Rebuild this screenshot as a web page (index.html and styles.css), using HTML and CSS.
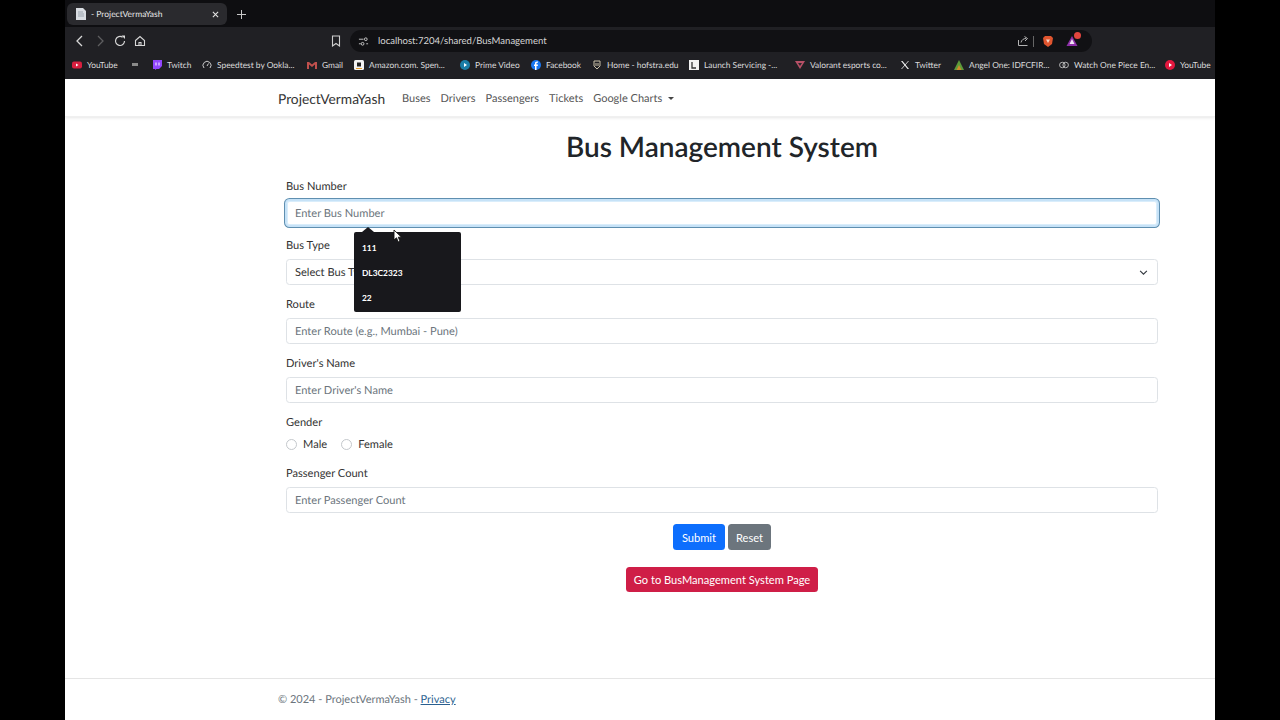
FILE: index.html
```html
<!DOCTYPE html>
<html lang="en">
<head>
<meta charset="utf-8">
<title>ProjectVermaYash</title>
<link rel="stylesheet" href="styles.css">
</head>
<body>
<div class="window">
  <div class="tabstrip">
    <div class="tab">
      <svg class="tab-ico" viewBox="0 0 12 12"><path d="M1 0h7l3 3v9H1z" fill="#d9dde2"/><path d="M3 4h5M3 6h6M3 8h6" stroke="#9aa3ad" stroke-width="1"/></svg>
      <span class="tab-title">- ProjectVermaYash</span>
      <svg class="tab-x" viewBox="0 0 8 8"><path d="M1 1l6 6M7 1l-6 6" stroke="#e4e4e4" stroke-width="1.2"/></svg>
    </div>
    <svg class="tab-new" viewBox="0 0 9 9"><path d="M4.500 0v9M0 4.500h9" stroke="#c8c8c8" stroke-width="1"/></svg>
  </div>
  <div class="toolbar">
    <svg class="tool back" viewBox="0 0 12 12"><path d="M8 1L3 6l5 5" fill="none" stroke="#d8d8d8" stroke-width="1.3"/></svg>
    <svg class="tool fwd" viewBox="0 0 12 12"><path d="M4 1l5 5-5 5" fill="none" stroke="#5e5e60" stroke-width="1.3"/></svg>
    <svg class="tool reload" viewBox="0 0 12 12"><path d="M10.500 6A4.500 4.500 0 1 1 8.600 2.300" fill="none" stroke="#d8d8d8" stroke-width="1.2"/><path d="M7.500 0.500h3.500v3.500z" fill="#d8d8d8"/></svg>
    <svg class="tool home" viewBox="0 0 12 12"><path d="M1.500 5.500L6 1.500l4.500 4v5h-9zM5 10.500V7.500h2v3" fill="none" stroke="#d8d8d8" stroke-width="1.100"/></svg>
    <svg class="tool mark" viewBox="0 0 12 12"><path d="M2.500 1h7v10L6 8.500 2.500 11z" fill="none" stroke="#cfcfcf" stroke-width="1.100"/></svg>
    <div class="omnibox">
      <svg class="site" viewBox="0 0 12 12"><path d="M1 3.500h5M9 8.500h2M1 8.500h2" stroke="#cfcfcf"/><circle cx="8.500" cy="3.500" r="1.500" fill="none" stroke="#cfcfcf"/><circle cx="5" cy="8.500" r="1.500" fill="none" stroke="#cfcfcf"/></svg>
      <span class="url">localhost:7204/shared/BusManagement</span>
      <svg class="share" viewBox="0 0 12 12"><path d="M1.500 5v5.500h9M4 7.500C4.500 5 6.500 3.500 9 3.500M7.500 1.500l3 2-2.500 2.500" fill="none" stroke="#b5b5b5"/></svg>
      <span class="omni-sep"></span>
      <svg class="brave" viewBox="0 0 12 12"><path d="M3 1h6l2 2-1 6-4 3-4-3-1-6z" fill="#e0552f"/><path d="M4 4.500h4L6 8z" fill="#f4d6c8"/></svg>
      <span class="rewards">
        <svg class="rewards-ico" viewBox="0 0 12 12"><path d="M6 1l5.500 10H.5z" fill="#8d2fa8"/><path d="M6 4l2.500 5h-5z" fill="#f2e6f5"/></svg>
        <span class="badge"></span>
      </span>
    </div>
  </div>
  <div class="bookmarks">
    <span class="bm w-yt"><svg viewBox="0 0 10 10"><rect y="1.500" width="10" height="7" rx="2" fill="#d81f3f"/><path d="M4 3.500l2.500 1.500L4 6.500z" fill="#fff"/></svg>YouTube</span>
    <span class="bm w-dot"><svg viewBox="0 0 10 10"><rect x="2" y="3" width="6" height="3" fill="#8a8a8a"/></svg></span>
    <span class="bm w-tw"><svg viewBox="0 0 10 10"><path d="M1 0h9v6L7 9H4.500L3 10V9H1z" fill="#9146ff"/><path d="M4 2.500v3M7 2.500v3" stroke="#fff"/></svg>Twitch</span>
    <span class="bm w-sp"><svg viewBox="0 0 10 10"><path d="M2 8a4 4 0 1 1 6 0M5 6l1.500-2.500" fill="none" stroke="#ccc"/></svg>Speedtest by Ookla...</span>
    <span class="bm w-gm"><svg viewBox="0 0 10 10"><path d="M0 2h2l3 2.500L8 2h2v7H8V4.500L5 7 2 4.500V9H0z" fill="#c0504d"/></svg>Gmail</span>
    <span class="bm w-am"><svg viewBox="0 0 10 10"><rect width="10" height="10" rx="1.500" fill="#f2f2f2"/><path d="M3 2.500h4v4H3z" fill="#222"/><path d="M2 8.500h6" stroke="#e29a28"/></svg>Amazon.com. Spen...</span>
    <span class="bm w-pr"><svg viewBox="0 0 10 10"><circle cx="5" cy="5" r="5" fill="#1b7da6"/><path d="M4 3l3 2-3 2z" fill="#fff"/></svg>Prime Video</span>
    <span class="bm w-fb"><svg viewBox="0 0 10 10"><circle cx="5" cy="5" r="5" fill="#1877f2"/><path d="M5.500 10V6h1.300l.2-1.500H5.500V3.500c0-.5.2-.7.7-.7H7V1.500H6C4.700 1.500 4 2.200 4 3.400V4.500H3V6h1v4z" fill="#fff"/></svg>Facebook</span>
    <span class="bm w-ho"><svg viewBox="0 0 10 10"><path d="M2 1h6v5L5 9 2 6z" fill="none" stroke="#c9c0a8"/><path d="M4 3v3M6 3v3" stroke="#c9c0a8"/></svg>Home - hofstra.edu</span>
    <span class="bm w-la"><svg viewBox="0 0 10 10"><rect width="10" height="10" fill="#f2f2f2"/><path d="M3 2v6h4" fill="none" stroke="#333" stroke-width="1.300"/></svg>Launch Servicing -...</span>
    <span class="bm w-va"><svg viewBox="0 0 10 10"><path d="M0 1h10L5 9z" fill="#b85067"/><path d="M3 3h4L5 6z" fill="#2a2a2d"/></svg>Valorant esports co...</span>
    <span class="bm w-xx"><svg viewBox="0 0 10 10"><path d="M1 1l6.500 8H9L2.500 1z" fill="#eee"/><path d="M8.500 1L1.500 9" stroke="#eee" stroke-width=".8"/></svg>Twitter</span>
    <span class="bm w-an"><svg viewBox="0 0 10 10"><path d="M5 0l5 10H0z" fill="#5d9a3a"/><path d="M5 5l2.500 5h-5z" fill="#d08a2c"/></svg>Angel One: IDFCFIR...</span>
    <span class="bm w-op"><svg viewBox="0 0 12 10"><circle cx="4" cy="5" r="3.300" fill="none" stroke="#ccc"/><circle cx="8" cy="5" r="3.300" fill="none" stroke="#ccc"/></svg>Watch One Piece En...</span>
    <span class="bm w-y2"><svg viewBox="0 0 10 10"><circle cx="5" cy="5" r="5" fill="#e3173e"/><path d="M4 3l3 2-3 2z" fill="#fff"/></svg>YouTube</span>
  </div>

  <div class="page">
    <nav class="navbar">
      <a class="brand">ProjectVermaYash</a>
      <a class="nav-link">Buses</a>
      <a class="nav-link">Drivers</a>
      <a class="nav-link">Passengers</a>
      <a class="nav-link">Tickets</a>
      <a class="nav-link">Google Charts<span class="caret"></span></a>
    </nav>
    <main class="content">
      <h1 class="title">Bus Management System</h1>
      <form class="form">
        <div class="group autocomplete">
          <label class="label">Bus Number</label>
          <div class="control focus">Enter Bus Number</div>
          <div class="popup">
            <span class="popup-arrow"></span>
            <div class="popup-item">111</div>
            <div class="popup-item">DL3C2323</div>
            <div class="popup-item">22</div>
          </div>
          <svg class="cursor" viewBox="0 0 10 14"><path d="M1 1v10l2.500-2.200L5.200 13l1.800-.8-1.700-4H8.500z" fill="#fff" stroke="#111" stroke-width=".9"/></svg>
        </div>
        <div class="group">
          <label class="label">Bus Type</label>
          <div class="control select"><span class="select-text">Select Bus Type</span>
            <svg class="chev" viewBox="0 0 16 16"><path d="M2 5l6 6 6-6" fill="none" stroke="#343a40" stroke-width="2"/></svg>
          </div>
        </div>
        <div class="group">
          <label class="label">Route</label>
          <div class="control">Enter Route (e.g., Mumbai - Pune)</div>
        </div>
        <div class="group">
          <label class="label">Driver's Name</label>
          <div class="control">Enter Driver's Name</div>
        </div>
        <div class="group">
          <label class="label">Gender</label>
          <div class="radios">
            <span class="radio"></span><span class="radio-text">Male</span>
            <span class="radio"></span><span class="radio-text">Female</span>
          </div>
        </div>
        <div class="group">
          <label class="label">Passenger Count</label>
          <div class="control">Enter Passenger Count</div>
        </div>
        <div class="buttons">
          <button type="button" class="btn blue">Submit</button>
          <button type="button" class="btn gray">Reset</button>
        </div>
        <div class="buttons second">
          <button type="button" class="btn red">Go to BusManagement System Page</button>
        </div>
      </form>
    </main>
    <footer class="footer">© 2024 - ProjectVermaYash - <a class="privacy">Privacy</a></footer>
  </div>
</div>
</body>
</html>
```
FILE: styles.css
```css
* { box-sizing: border-box; }
html, body { margin: 0; height: 100%; background: #000; overflow: hidden; }
body { font-family: Lato, "Open Sans", sans-serif; color: #212529; text-rendering: geometricPrecision; }
.window { width: 1150px; height: 720px; margin-left: 65px; display: flex; flex-direction: column; }

.tabstrip { height: 27px; background: #0e0e11; display: flex; align-items: flex-start; padding: 3px 0 0 2px; }
.tab { width: 160px; height: 22px; background: #2a2a2e; border-radius: 6px; display: flex; align-items: center; padding: 0 8px; color: #e6e6e6; font-size: 8.500px; }
.tab-ico { width: 12px; height: 12px; margin-right: 4px; }
.tab-title { flex: 1; white-space: nowrap; }
.tab-x { width: 7px; height: 7px; }
.tab-new { width: 9px; height: 9px; margin: 7px 0 0 10px; }

.toolbar { height: 26px; background: #202024; display: flex; align-items: center; padding: 2px 0 0 9px; }
.tool { width: 12px; height: 12px; flex: none; }
.back { margin-right: 8px; }
.fwd { margin-right: 8px; }
.reload { margin-right: 8px; }
.home { margin-right: 184px; }
.mark { margin-right: 8px; }
.omnibox { width: 742px; height: 22px; background: #111114; border-radius: 11px; display: flex; align-items: center; padding-left: 8px; color: #d5d5d5; font-size: 9.550px; }
.site { width: 11px; height: 11px; margin-right: 9px; }
.url { flex: 1; white-space: nowrap; }
.share { width: 12px; height: 12px; margin-right: 4px; }
.omni-sep { width: 1px; height: 11px; background: #666; margin-right: 8px; }
.brave { width: 12px; height: 12px; margin-right: 12px; }
.rewards { position: relative; width: 12px; height: 12px; margin-right: 14px; }
.rewards-ico { width: 12px; height: 12px; display: block; }
.badge { position: absolute; right: -3px; top: -3px; width: 7px; height: 7px; border-radius: 50%; background: #e2453f; }

.bookmarks { height: 26px; background: #202024; display: flex; align-items: center; padding: 0 0 2px 7px; color: #dcdcdc; font-size: 8.400px; white-space: nowrap; overflow: hidden; }
.bm { display: flex; align-items: center; flex: none; overflow: hidden; }
.bm svg { width: 10px; height: 10px; margin-right: 5px; flex: none; }
.w-yt { width: 58px; }
.w-dot { width: 22px; }
.w-tw { width: 50px; }
.w-sp { width: 105px; }
.w-gm { width: 47px; }
.w-am { width: 106px; }
.w-pr { width: 71px; }
.w-fb { width: 61px; }
.w-ho { width: 97px; }
.w-la { width: 106px; }
.w-va { width: 105px; }
.w-xx { width: 54px; }
.w-an { width: 105px; }
.w-op { width: 106px; }
.w-y2 { width: 50px; }

.page { flex: 1; background: #fff; display: flex; flex-direction: column; min-height: 0; }
.navbar { height: 38px; display: flex; align-items: center; padding: 2px 0 0 213px; box-shadow: 0 1px 3px rgba(0,0,0,.1); border-bottom: 1px solid #f0f0f0; font-size: 11px; color: #555; }
.brand { font-size: 13.750px; color: #333; margin-right: 17px; }
.nav-link { margin-right: 10px; }
.caret { display: inline-block; margin-left: 6px; vertical-align: 2px; border-top: 3px solid #444; border-left: 3px solid transparent; border-right: 3px solid transparent; }

.content { flex: 1; width: 872px; margin-left: 221px; }
.title { margin: 11px 0 13px; text-align: center; font-size: 28px; line-height: 36px; font-weight: 600; color: #212529; }
.group { margin-bottom: 10px; position: relative; }
.label { display: block; height: 19px; line-height: 20px; margin-bottom: 4px; font-size: 11.100px; color: #333; }
.control { height: 26px; border: 1px solid #dee2e6; border-radius: 3.500px; padding: 0 8px; line-height: 26px; font-size: 11.100px; color: #6c757d; position: relative; background: #fff; }
.focus { border-color: #c6e2f7; box-shadow: 0 0 0 1px #c6e2f7, 0 0 0 2px #5f8fb0, inset 0 0 0 1px #d9edfb; }
.select { color: #333; }
.chev { position: absolute; right: 9px; top: 8px; width: 9px; height: 9px; }
.radios { height: 19px; margin-top: -1px; display: flex; align-items: center; font-size: 11.100px; color: #333; }
.radio { width: 11px; height: 11px; border: 1px solid #c4c8cc; border-radius: 50%; margin-right: 6px; }
.radio-text { margin-right: 14px; }
.buttons { display: flex; justify-content: center; gap: 3px; margin-top: 11px; }
.buttons.second { margin-top: 17px; }
.btn { height: 26px; border: 0; border-radius: 3.500px; padding: 0 8px; font: inherit; font-size: 11.100px; color: #fff; }
.blue { background: #0d6efd; padding: 0 9px; }
.gray { background: #6c757d; }
.red { background: #cf1e47; height: 25px; }

.autocomplete { z-index: 2; }
.popup { position: absolute; left: 68px; top: 55px; width: 107px; height: 80px; background: #18181c; border-radius: 2px; color: #fff; font-size: 8.400px; font-weight: 700; padding-top: 4px; }
.popup-arrow { position: absolute; left: 8px; top: -5px; border-bottom: 5px solid #18181c; border-left: 6px solid transparent; border-right: 6px solid transparent; }
.popup-item { height: 25px; line-height: 25px; padding-left: 8px; }
.cursor { position: absolute; left: 107px; top: 52px; width: 10px; height: 14px; }

.footer { height: 42px; border-top: 1px solid #e5e5e5; padding-left: 213px; line-height: 42px; font-size: 11px; color: #6c757d; }
.privacy { color: #2a5f8f; text-decoration: underline; }
```
